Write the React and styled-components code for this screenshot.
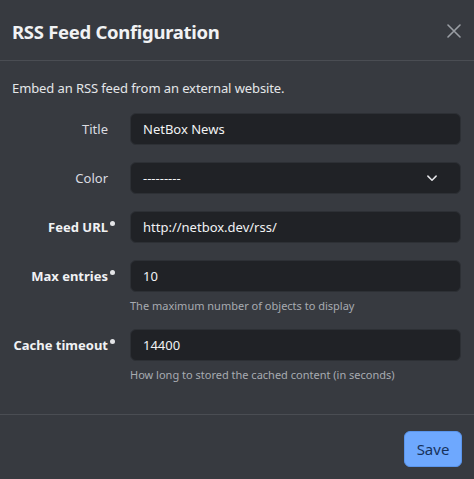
import styled, { createGlobalStyle } from 'styled-components';

const GlobalStyle = createGlobalStyle`
  html, body {
    margin: 0;
    padding: 0;
    background: #373a40;
  }
  body {
    font-family: "Noto Sans", "Open Sans", sans-serif;
    color: #dee0e3;
  }
`;

const Modal = styled.div`
  width: 474px;
  height: 479px;
  display: flex;
  flex-direction: column;
  background: #373a40;
  box-sizing: border-box;
`;

const Header = styled.div`
  height: 61px;
  box-sizing: border-box;
  display: flex;
  align-items: center;
  justify-content: space-between;
  padding: 2px 12px 0 12px;
  border-bottom: 1px solid #4a4d53;
`;

const Title = styled.h1`
  margin: 0;
  font-size: 18.5px;
  font-weight: 700;
  color: #f1f2f4;
  letter-spacing: -0.3px;
`;

const Close = styled.button`
  width: 16px;
  height: 16px;
  padding: 0;
  border: none;
  background: none;
  display: flex;
  align-items: center;
  justify-content: center;
  cursor: pointer;
`;

const Body = styled.div`
  flex: 1;
  padding: 17px 13px 0 12px;
`;

const Intro = styled.p`
  margin: 0 0 15px;
  font-size: 13px;
  line-height: 20px;
  letter-spacing: -0.1px;
  color: #e4e6e9;
`;

const Row = styled.div`
  display: grid;
  grid-template-columns: 96px 1fr;
  column-gap: 22px;
  margin-bottom: ${(p) => (p.$help ? 14 : 17)}px;
`;

const Label = styled.label`
  position: relative;
  justify-self: end;
  height: 32px;
  line-height: 32px;
  font-size: 13px;
  font-weight: ${(p) => (p.$required ? 700 : 400)};
  color: ${(p) => (p.$required ? '#f1f2f4' : '#dadce0')};
  white-space: nowrap;

  ${(p) =>
    p.$required &&
    `
    &::after {
      content: '';
      position: absolute;
      right: -7px;
      top: 10px;
      width: 5px;
      height: 5px;
      border-radius: 50%;
      background: #e3e4e7;
    }
  `}
`;

const Field = styled.div`
  display: flex;
  flex-direction: column;
`;

const Input = styled.div`
  height: 32px;
  box-sizing: border-box;
  display: flex;
  align-items: center;
  justify-content: space-between;
  padding: 0 22px 0 12px;
  background: #202226;
  border: 1px solid #2d3035;
  border-radius: 6px;
  font-size: 13px;
  color: #f1f2f4;
`;

const Help = styled.div`
  margin-top: 5px;
  font-size: 11px;
  line-height: 18px;
  color: #a7abb1;
`;

const Footer = styled.div`
  border-top: 1px solid #4a4d53;
  display: flex;
  justify-content: flex-end;
  padding: 16px 12px 12px;
`;

const SaveButton = styled.button`
  width: 58px;
  height: 36px;
  border: 1px solid #5a95ec;
  border-radius: 6px;
  background: #6ea8fe;
  color: #17325c;
  font-family: inherit;
  font-size: 15px;
  cursor: pointer;
`;

const Chevron = () => (
  <svg width="12" height="12" viewBox="0 0 16 16" fill="none">
    <path d="M2.5 5.5L8 11l5.5-5.5" stroke="#e6e7ea" strokeWidth="2" strokeLinecap="round" strokeLinejoin="round" />
  </svg>
);

const CloseIcon = () => (
  <svg width="14" height="14" viewBox="0 0 14 14" fill="none">
    <path d="M1 1l12 12M13 1L1 13" stroke="#9a9ea4" strokeWidth="1.6" strokeLinecap="round" />
  </svg>
);

const fields = [
  { label: 'Title', value: 'NetBox News' },
  { label: 'Color', value: '---------', select: true },
  { label: 'Feed URL', value: 'http://netbox.dev/rss/', required: true },
  { label: 'Max entries', value: '10', required: true, help: 'The maximum number of objects to display' },
  {
    label: 'Cache timeout',
    value: '14400',
    required: true,
    help: 'How long to stored the cached content (in seconds)',
  },
];

export default function App() {
  return (
    <>
      <GlobalStyle />
      <Modal>
        <Header>
          <Title>RSS Feed Configuration</Title>
          <Close aria-label="Close">
            <CloseIcon />
          </Close>
        </Header>
        <Body>
          <Intro>Embed an RSS feed from an external website.</Intro>
          {fields.map((f) => (
            <Row key={f.label} $help={!!f.help}>
              <Label $required={f.required}>{f.label}</Label>
              <Field>
                <Input>
                  <span>{f.value}</span>
                  {f.select && <Chevron />}
                </Input>
                {f.help && <Help>{f.help}</Help>}
              </Field>
            </Row>
          ))}
        </Body>
        <Footer>
          <SaveButton>Save</SaveButton>
        </Footer>
      </Modal>
    </>
  );
}
